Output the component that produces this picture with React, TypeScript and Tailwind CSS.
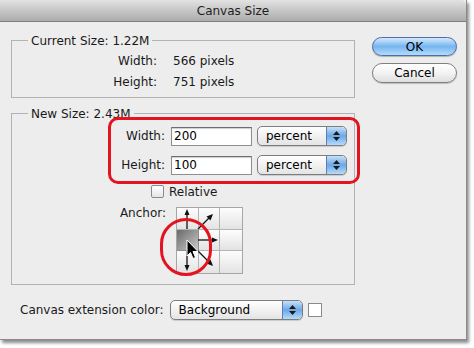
import React from "react";

const font = { fontFamily: '"DejaVu Sans", Verdana, sans-serif' };

function Stepper() {
  return (
    <div className="flex h-full w-[20px] flex-col items-center justify-center gap-[2px] rounded-r-[4px] border-l border-[#5d7fb0] bg-gradient-to-b from-[#c7e0f8] via-[#6aa8e6] to-[#b7dbfb]">
      <svg width="7" height="4" viewBox="0 0 7 4">
        <path d="M3.5 0 L7 4 L0 4 Z" fill="#1a1a1a" />
      </svg>
      <svg width="7" height="4" viewBox="0 0 7 4">
        <path d="M0 0 L7 0 L3.5 4 Z" fill="#1a1a1a" />
      </svg>
    </div>
  );
}

function PopUp({ label, width }: { label: string; width: string }) {
  return (
    <div
      className={`flex h-[20px] ${width} items-stretch overflow-hidden rounded-[5px] border border-[#7d7d7d] bg-gradient-to-b from-white to-[#e4e4e4] shadow-[0_1px_1px_rgba(0,0,0,0.15)]`}
    >
      <div className="flex flex-1 items-center pl-[8px] text-[12px] leading-none text-black">
        {label}
      </div>
      <Stepper />
    </div>
  );
}

function TextField({ value }: { value: string }) {
  return (
    <div className="flex h-[19px] w-[81px] items-center border border-[#8e8e8e] border-t-[#6e6e6e] bg-white pl-[2px] text-[12px] leading-none text-black shadow-[inset_0_1px_1px_rgba(0,0,0,0.2)]">
      {value}
    </div>
  );
}

function AnchorGrid() {
  const cells = Array.from({ length: 9 }, (_, i) => i);
  return (
    <div className="relative h-[67px] w-[67px]">
      <div className="grid h-full w-full grid-cols-3 grid-rows-3 border border-[#a6a6a6]">
        {cells.map((i) => (
          <div
            key={i}
            className={
              i === 3
                ? "border-r border-b border-[#8d8d8d] bg-gradient-to-br from-[#6a6a6a] via-[#9a9a9a] to-[#c9c9c9]"
                : `border-[#b4b4b4] bg-gradient-to-b from-[#fdfdfd] to-[#e3e3e3] ${i % 3 !== 2 ? "border-r" : ""} ${i < 6 ? "border-b" : ""}`
            }
          />
        ))}
      </div>
      <svg className="absolute left-0 top-0" width="67" height="67" viewBox="0 0 67 67">
        <g stroke="#111" strokeWidth="1.3" fill="#111">
          <line x1="11" y1="22" x2="11" y2="6" />
          <path d="M11 2 L8.5 8 L13.5 8 Z" stroke="none" />
          <line x1="22" y1="22" x2="33" y2="11" />
          <path d="M37 7 L30.5 9.5 L34.5 13.5 Z" stroke="none" />
          <line x1="22" y1="33" x2="38" y2="33" />
          <path d="M42 33 L36 30.5 L36 35.5 Z" stroke="none" />
          <line x1="22" y1="44" x2="33" y2="55" />
          <path d="M37 59 L30.5 56.5 L34.5 52.5 Z" stroke="none" />
          <line x1="11" y1="44" x2="11" y2="60" />
          <path d="M11 64 L8.5 58 L13.5 58 Z" stroke="none" />
        </g>
        <path
          d="M11 33 L11 49 L14.5 45.5 L17 51.5 L19.5 50.5 L17 44.5 L22 44.5 Z"
          fill="#000"
          stroke="#fff"
          strokeWidth="1"
        />
      </svg>
    </div>
  );
}

export default function App() {
  return (
    <div className="h-[348px] w-[474px] bg-white" style={font}>
      <div className="flex h-[340px] w-[467px] flex-col border-r border-b border-[#8a8a8a] bg-[#ededed] shadow-[2px_3px_3px_rgba(0,0,0,0.45)]">
        {/* Title bar */}
        <div className="flex h-[22px] items-center justify-center rounded-tr-[5px] border-b border-[#7f7f7f] bg-gradient-to-b from-[#e2e2e2] to-[#acacac] text-[12px] text-[#1e1e1e]">
          Canvas Size
        </div>

        <div className="relative flex pl-[11px]">
          {/* Left column */}
          <div className="flex w-[344px] flex-col">
            {/* Current size */}
            <div className="mt-[18px] h-[58px] border border-[#b3b3b3]">
              <span className="-mt-[8px] ml-[16px] block w-fit bg-[#ededed] px-[3px] text-[12px] leading-[16px] text-[#1a1a1a]">
                Current Size: 1.22M
              </span>
              <div className="mt-[4px] grid grid-cols-[145px_auto] gap-x-[16px] gap-y-[5px] text-[12px] leading-[16px] text-[#1a1a1a]">
                <span className="text-right">Width:</span>
                <span>566 pixels</span>
                <span className="text-right">Height:</span>
                <span>751 pixels</span>
              </div>
            </div>

            {/* New size */}
            <div className="mt-[15px] h-[172px] border border-[#b3b3b3]">
              <span className="-mt-[8px] ml-[16px] block w-fit bg-[#ededed] px-[3px] text-[12px] leading-[16px] text-[#1a1a1a]">
                New Size: 2.43M
              </span>
              <div className="mt-[4px] flex flex-col gap-[9px] text-[12px] text-[#1a1a1a]">
                <div className="flex h-[20px] items-center">
                  <span className="w-[153px] text-right">Width:</span>
                  <div className="ml-[6px]">
                    <TextField value="200" />
                  </div>
                  <div className="ml-[5px]">
                    <PopUp label="percent" width="w-[90px]" />
                  </div>
                </div>
                <div className="flex h-[20px] items-center">
                  <span className="w-[153px] text-right">Height:</span>
                  <div className="ml-[6px]">
                    <TextField value="100" />
                  </div>
                  <div className="ml-[5px]">
                    <PopUp label="percent" width="w-[90px]" />
                  </div>
                </div>
              </div>
              <div className="mt-[10px] flex h-[13px] items-center pl-[139px] text-[12px] text-[#1a1a1a]">
                <div className="h-[13px] w-[13px] rounded-[2px] border border-[#8a8a8a] bg-gradient-to-b from-white to-[#e6e6e6]" />
                <span className="ml-[5px] leading-[16px]">Relative</span>
              </div>
              <div className="mt-[9px] flex items-start text-[12px] text-[#1a1a1a]">
                <span className="-mt-[2px] w-[154px] text-right leading-[16px]">Anchor:</span>
                <div className="ml-[10px]">
                  <AnchorGrid />
                </div>
              </div>
            </div>

            {/* Extension color */}
            <div className="mt-[15px] flex items-center text-[12px] text-[#1a1a1a]">
              <span className="ml-[9px]">Canvas extension color:</span>
              <div className="ml-[6px]">
                <PopUp label="Background" width="w-[133px]" />
              </div>
              <div className="ml-[5px] h-[14px] w-[14px] border border-[#8a8a8a] bg-white" />
            </div>
          </div>

          {/* Buttons */}
          <div className="ml-[17px] mt-[15px] flex flex-col gap-[7px]">
            <button className="h-[19px] w-[85px] rounded-full border border-[#4d6fa6] bg-gradient-to-b from-[#d4e9fc] via-[#76b5ef] to-[#b3dcfd] text-[12px] leading-none text-black shadow-[0_1px_1px_rgba(0,0,0,0.25)]">
              OK
            </button>
            <button className="h-[20px] w-[85px] rounded-full border border-[#7f7f7f] bg-gradient-to-b from-white via-[#f3f3f3] to-[#dedede] text-[12px] leading-none text-black shadow-[0_1px_1px_rgba(0,0,0,0.2)]">
              Cancel
            </button>
          </div>

          {/* Red annotations */}
          <div className="pointer-events-none absolute left-[108px] top-[95px] h-[67px] w-[252px] rounded-[10px] border-[3px] border-[#e3141f]" />
          <div className="pointer-events-none absolute left-[160px] top-[196px] h-[58px] w-[52px] rounded-full border-[3px] border-[#e3141f]" />
        </div>
      </div>
    </div>
  );
}
